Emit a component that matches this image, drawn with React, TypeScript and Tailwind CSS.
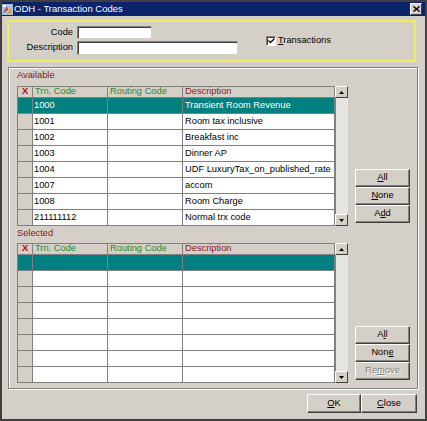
import React from 'react';

const available = [
  ['1000', '', 'Transient Room Revenue'],
  ['1001', '', 'Room tax inclusive'],
  ['1002', '', 'Breakfast inc'],
  ['1003', '', 'Dinner AP'],
  ['1004', '', 'UDF LuxuryTax_on_published_rate'],
  ['1007', '', 'accom'],
  ['1008', '', 'Room Charge'],
  ['211111112', '', 'Normal trx code'],
];

const selected = Array.from({ length: 8 }, () => ['', '', '']);

function AppIcon() {
  return (
    <svg width="11" height="11" viewBox="0 0 11 11">
      <rect x="0" y="0" width="11" height="11" fill="#9fc6e8" />
      <path d="M1 9 L5 2 L6 6 Z" fill="#e0301e" />
      <path d="M5 10 L9 3 L10 9 Z" fill="#f29a1c" />
      <rect x="1" y="1" width="3" height="2" fill="#ffffff" />
    </svg>
  );
}

function CloseBtn() {
  return (
    <div className="ml-auto w-[12px] h-[12px] bg-[#d4d0c8] border border-t-white border-l-white border-r-[#404040] border-b-[#404040] flex items-center justify-center">
      <svg width="7" height="6" viewBox="0 0 7 6">
        <path d="M0.5 0.5 L6.5 5.5 M6.5 0.5 L0.5 5.5" stroke="#000" strokeWidth="1.4" />
      </svg>
    </div>
  );
}

function Button({ children, w = 'w-[55px]', h = 'h-[18px]', disabled = false }: { children: React.ReactNode; w?: string; h?: string; disabled?: boolean }) {
  return (
    <div
      className={`${w} ${h} bg-[#d4d0c8] border border-t-white border-l-white border-r-[#404040] border-b-[#404040] shadow-[inset_-1px_-1px_0_#808080] flex items-center justify-center leading-none ${
        disabled ? 'text-[#808080] [text-shadow:1px_1px_0_#fff]' : 'text-black'
      }`}
    >
      <span>{children}</span>
    </div>
  );
}

function Arrow({ up }: { up?: boolean }) {
  return (
    <svg width="5" height="3" viewBox="0 0 5 3">
      <path d={up ? 'M0 3 L2.5 0 L5 3 Z' : 'M0 0 L2.5 3 L5 0 Z'} fill="#000" />
    </svg>
  );
}

function ScrollBar() {
  return (
    <div className="w-[13px] h-[140px] flex flex-col">
      <div className="h-[12px] bg-[#d4d0c8] border border-t-white border-l-white border-r-[#404040] border-b-[#404040] flex items-center justify-center">
        <Arrow up />
      </div>
      <div className="flex-1 bg-[#e6e4e0] border-l border-[#808080]" />
      <div className="h-[12px] bg-[#d4d0c8] border border-t-white border-l-white border-r-[#404040] border-b-[#404040] flex items-center justify-center">
        <Arrow />
      </div>
    </div>
  );
}

function Grid({ data }: { data: string[][] }) {
  return (
    <div className="flex w-[331px] h-[140px]">
      <div className="flex flex-col w-[318px] border-l border-t border-[#808080]">
        <div className="flex h-[11px] bg-[#d4d0c8] leading-none">
          <div className="w-[15px] border-r border-b border-[#808080] flex items-center justify-center text-[#c00000] font-bold">X</div>
          <div className="w-[75px] border-r border-b border-[#808080] flex items-center pl-[2px] text-[#2a8a2a]">Trn. Code</div>
          <div className="w-[75px] border-r border-b border-[#808080] flex items-center pl-[2px] text-[#2a8a2a]">Routing Code</div>
          <div className="w-[152px] border-r border-b border-[#808080] flex items-center pl-[2px] text-[#8b1a1a]">Description</div>
        </div>
        {data.map((r, i) => {
          const sel = i === 0;
          return (
            <div key={i} className={`flex h-[16px] leading-none ${sel ? 'bg-[#008080] text-white' : 'text-black'}`}>
              <div className={`w-[15px] border-r border-b border-[#808080] ${sel ? '' : 'bg-[#d4d0c8]'}`} />
              <div className={`w-[75px] border-r border-b border-[#808080] flex items-center pl-[1px] ${sel ? '' : 'bg-white'}`}>{r[0]}</div>
              <div className={`w-[75px] border-r border-b border-[#808080] flex items-center pl-[2px] ${sel ? '' : 'bg-white'}`}>{r[1]}</div>
              <div className={`w-[152px] border-r border-b border-[#808080] flex items-center pl-[2px] ${sel ? '' : 'bg-white'}`}>{r[2]}</div>
            </div>
          );
        })}
      </div>
      <ScrollBar />
    </div>
  );
}

function Field({ w, h }: { w: string; h: string }) {
  return <div className={`${w} ${h} ml-[4px] bg-white border border-t-[#808080] border-l-[#808080] border-r-[#d4d0c8] border-b-[#d4d0c8] shadow-[inset_1px_1px_0_#404040]`} />;
}

export default function App() {
  return (
    <div className="w-[427px] h-[421px] bg-[#d4d0c8] border-2 border-[#404040] flex flex-col overflow-hidden font-['Liberation_Sans',Arial,sans-serif] text-[9.3px] text-black">
      {/* title bar */}
      <div className="h-[14px] shrink-0 bg-[#0a246a] flex items-center pr-[3px]">
        <AppIcon />
        <span className="ml-[1px] text-white text-[9.5px] leading-none">ODH - Transaction Codes</span>
        <CloseBtn />
      </div>

      {/* search header */}
      <div className="mt-[4px] ml-[5px] w-[409px] h-[42px] shrink-0 border-2 border-[#eeee5a] flex">
        <div className="flex flex-col pt-[4px] gap-[2px]">
          <div className="flex items-center h-[13px]">
            <span className="w-[64px] text-right leading-none">Code</span>
            <Field w="w-[75px]" h="h-[13px]" />
          </div>
          <div className="flex items-center h-[14px]">
            <span className="w-[64px] text-right leading-none">Description</span>
            <Field w="w-[161px]" h="h-[14px]" />
          </div>
        </div>
        <div className="ml-[28px] self-center flex items-center gap-[2px]">
          <div className="w-[10px] h-[10px] bg-white border border-t-[#808080] border-l-[#808080] border-r-white border-b-white shadow-[inset_1px_1px_0_#404040] flex items-center justify-center">
            <svg width="7" height="6" viewBox="0 0 7 6">
              <path d="M0.5 2.5 L2.5 4.5 L6.5 0.5" stroke="#000" strokeWidth="1.3" fill="none" />
            </svg>
          </div>
          <span className="leading-none"><span className="underline">T</span>ransactions</span>
        </div>
      </div>

      {/* group box */}
      <div className="mt-[5px] ml-[6px] w-[410px] h-[322px] shrink-0 border border-[#808080] shadow-[1px_1px_0_#fff,inset_1px_1px_0_#fff] flex flex-col pl-[8px] pt-[1px]">
        <div className="h-[14px] flex items-center text-[#8b1414] leading-none">Available</div>
        <div className="mt-[3px] flex">
          <Grid data={available} />
          <div className="ml-[7px] flex flex-col justify-end pb-[3px]">
            <Button><span className="underline">A</span>ll</Button>
            <Button><span className="underline">N</span>one</Button>
            <Button>A<span className="underline">d</span>d</Button>
          </div>
        </div>
        <div className="mt-[1px] h-[14px] flex items-center text-[#8b1414] leading-none">Selected</div>
        <div className="mt-[2px] flex">
          <Grid data={selected} />
          <div className="ml-[7px] flex flex-col justify-end pb-[3px]">
            <Button>A<span className="underline">l</span>l</Button>
            <Button>Non<span className="underline">e</span></Button>
            <Button disabled>Re<span className="underline">m</span>ove</Button>
          </div>
        </div>
      </div>

      {/* dialog buttons */}
      <div className="mt-[5px] flex justify-end pr-[8px]">
        <Button w="w-[54px]" h="h-[19px]"><span className="underline">O</span>K</Button>
        <Button w="w-[56px]" h="h-[19px]"><span className="underline">C</span>lose</Button>
      </div>
    </div>
  );
}
